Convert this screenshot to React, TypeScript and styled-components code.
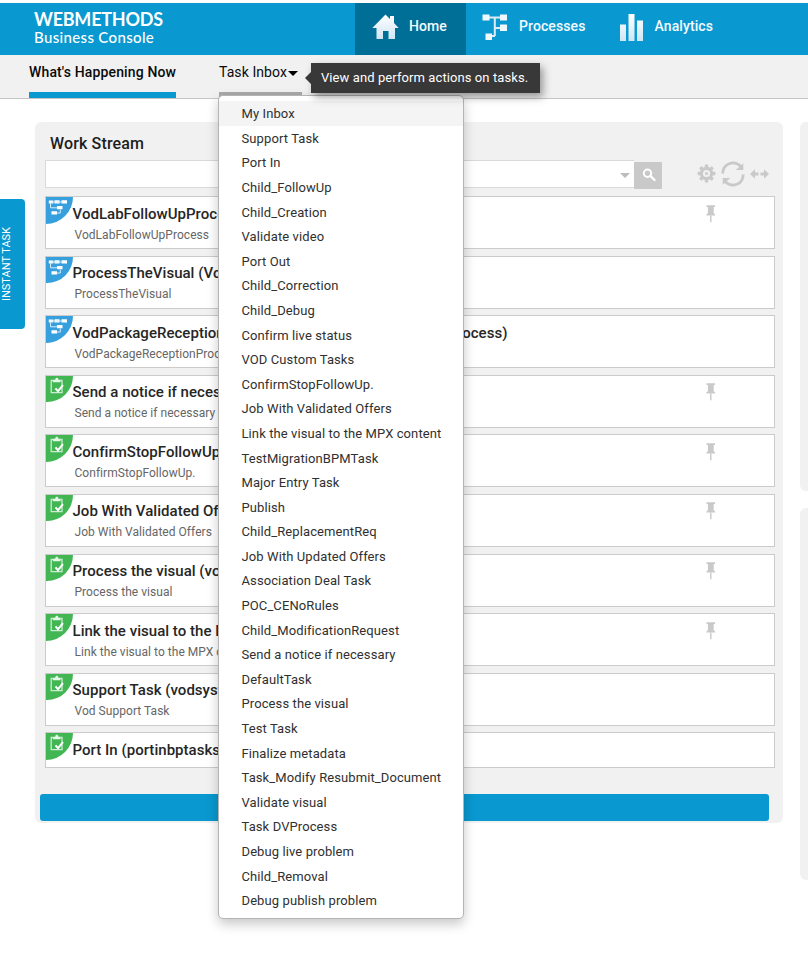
import React from 'react';
import styled, { createGlobalStyle } from 'styled-components';

const GlobalStyle = createGlobalStyle`
  * { box-sizing: border-box; }
  html, body { margin: 0; padding: 0; overflow: hidden; background: #fff; }
  body { font-family: Roboto, "Liberation Sans", sans-serif; color: #222; }
`;

const Page = styled.div`
  position: relative;
  width: 808px;
  height: 958px;
  overflow: hidden;
  background: #fff;
`;

const Header = styled.header`
  display: flex;
  height: 55px;
  border-top: 3px solid #c9cfd2;
  border-image: linear-gradient(#fff 55%, #bfc5c8 75%) 3;
  background: #0998cf;
`;

const Brand = styled.div`
  width: 355px;
  padding: 6px 0 0 34px;
  color: #fff;
  font-family: Lato, sans-serif;
`;

const BrandName = styled.div`
  font-size: 18px;
  line-height: 20px;
  font-weight: 700;
  letter-spacing: -0.25px;
`;

const BrandProduct = styled.div`
  margin-top: -1px;
  font-size: 15px;
  line-height: 18px;
  font-weight: 500;
  letter-spacing: 0.34px;
`;

const NavItem = styled.a<{ $active?: boolean; $width: number; $gap: number; $inset: number }>`
  display: flex;
  align-items: center;
  width: ${p => p.$width}px;
  height: 52px;
  padding: 0 0 4px ${p => p.$inset}px;
  gap: ${p => p.$gap}px;
  background: ${p => (p.$active ? '#006f98' : 'transparent')};
  color: #f4fbff;
  font-size: 14px;
  font-weight: 500;
  letter-spacing: 0.1px;
`;

const NavLabel = styled.span`
  padding-bottom: 1.5px;
`;

const SubNav = styled.nav`
  display: flex;
  height: 44px;
  padding-left: 29px;
  gap: 43px;
  background: #f1f1f1;
  border-bottom: 1px solid #c6c6c6;
`;

const Tab = styled.div<{ $active?: boolean }>`
  position: relative;
  display: flex;
  align-items: flex-start;
  width: ${p => (p.$active ? 147 : 83)}px;
  height: 43px;
  padding-top: 8px;
  border-bottom: 6px solid ${p => (p.$active ? '#0998cf' : '#a9a9a9')};
  color: #0a0a0a;
  font-size: 14px;
  line-height: 18px;
  font-weight: ${p => (p.$active ? 500 : 400)};
  letter-spacing: ${p => (p.$active ? 0.14 : 0.08)}px;
  white-space: nowrap;
`;

const Caret = styled.span<{ $muted?: boolean }>`
  flex: none;
  width: 0;
  height: 0;
  margin: ${p => (p.$muted ? '2px 4px 0 0' : '8px 0 0 1px')};
  border: ${p => (p.$muted ? 5.5 : 5)}px solid transparent;
  border-top-color: ${p => (p.$muted ? '#bcbcbc' : '#000')};
  border-bottom: 0;
`;

const Tooltip = styled.div`
  position: absolute;
  z-index: 4;
  left: 92px;
  top: 8px;
  width: 229px;
  height: 30px;
  padding-left: 10px;
  background: #383838;
  color: #fff;
  font-size: 13px;
  font-weight: 400;
  line-height: 30px;
  letter-spacing: 0.09px;
  box-shadow: 3px 4px 8px rgba(0, 0, 0, 0.38);

  &::before {
    content: '';
    position: absolute;
    left: -6px;
    top: 9px;
    border: 6px solid transparent;
    border-left: 0;
    border-right-color: #383838;
  }
`;

const Menu = styled.ul`
  position: absolute;
  z-index: 3;
  left: -1px;
  top: 40px;
  width: 246px;
  height: 824px;
  margin: 0;
  padding: 5px 0;
  list-style: none;
  background: #fff;
  border: 1px solid #b4b4b4;
  border-radius: 5px;
  box-shadow: 0 5px 12px rgba(0, 0, 0, 0.22);
`;

const MenuItem = styled.li<{ $hover?: boolean }>`
  height: 24.6px;
  padding: 1.2px 0 0 22.5px;
  background: ${p => (p.$hover ? '#f4f4f4' : 'transparent')};
  color: #303030;
  font-size: 13px;
  line-height: 24.6px;
  letter-spacing: 0.1px;
`;

const InstantTask = styled.button`
  position: absolute;
  left: 0;
  top: 199px;
  display: flex;
  align-items: center;
  justify-content: center;
  width: 25px;
  height: 130px;
  padding: 0 12px 0 0;
  border: 0;
  border-radius: 0 4px 4px 0;
  background: #0998cf;
  color: #fff;
  font: 400 11px Roboto, sans-serif;
`;

const Vertical = styled.span`
  writing-mode: vertical-rl;
  transform: rotate(180deg);
  white-space: nowrap;
`;

const Content = styled.main`
  display: flex;
  align-items: flex-start;
  gap: 17px;
  padding: 23px 0 0 35px;
`;

const Panel = styled.section`
  flex: none;
  width: 748px;
  height: 701px;
  padding: 12px 8px 0 10px;
  border-radius: 6px;
  background: #f1f1f1;
`;

const PanelTitle = styled.h2`
  margin: 0 0 7px 5px;
  color: #1d1d1d;
  font-size: 16px;
  line-height: 19px;
  font-weight: 500;
  letter-spacing: 0.14px;
`;

const Toolbar = styled.div`
  display: flex;
  align-items: flex-start;
  height: 36px;
`;

const SearchField = styled.div`
  display: flex;
  align-items: center;
  justify-content: flex-end;
  width: 589px;
  height: 28px;
  border: 1px solid #d9d9d9;
  border-right: 0;
  background: #fff;
`;

const SearchButton = styled.button`
  display: grid;
  place-items: center;
  width: 28px;
  height: 27px;
  margin-top: 2px;
  padding: 0 0 2px 1px;
  border: 0;
  border-radius: 1px;
  background: #c9c9c9;
`;

const Tools = styled.div`
  display: flex;
  align-items: center;
  gap: 5px;
  height: 27px;
  margin-left: 35px;
`;

const Stream = styled.div`
  display: flex;
  flex-direction: column;
  gap: 6.6px;
  width: 730px;
`;

const Card = styled.article<{ $short?: boolean }>`
  display: flex;
  height: ${p => (p.$short ? 36 : 53)}px;
  border: 1px solid #cbcbcb;
  background: #fff;
`;

const Badge = styled.div<{ $kind: Kind }>`
  flex: none;
  width: 26.5px;
  height: 26.5px;
  border-radius: 0 0 27px 0;
  background: ${p => (p.$kind === 'process' ? '#36a0de' : '#43b654')};
`;

const CardText = styled.div`
  width: 620px;
  padding-top: 7.5px;
  white-space: nowrap;
`;

const CardTitle = styled.div`
  color: #262626;
  font-size: 15px;
  line-height: 18px;
  font-weight: 500;
  letter-spacing: 0.03px;
`;

const CardSubtitle = styled.div`
  margin: 4px 0 0 2px;
  color: #666;
  font-size: 12px;
  line-height: 16px;
  letter-spacing: 0.04px;
`;

const PinSlot = styled.div`
  padding: 7.5px 0 0 13px;
`;

const MoreButton = styled.button`
  display: block;
  width: 729px;
  height: 27px;
  margin: 26px 0 0 -5px;
  border: 0;
  border-radius: 3px;
  background: #0998cf;
`;

const SideColumn = styled.aside`
  display: flex;
  flex-direction: column;
  gap: 17px;
`;

const SidePanel = styled.section<{ $height: number }>`
  width: 300px;
  height: ${p => p.$height}px;
  border-radius: 6px;
  background: #f1f1f1;
`;

const Icon = styled.svg`
  display: block;
  flex: none;
`;

type Kind = 'process' | 'task';

const IconFill = () => (
  <defs>
    <linearGradient id="iconFill" x1="0" y1="0" x2="0" y2="1">
      <stop offset="0" stopColor="#ffffff" />
      <stop offset="1" stopColor="#cfe6f3" />
    </linearGradient>
  </defs>
);

const HomeIcon = () => (
  <Icon width="27" height="26" viewBox="0 0 27 26">
    <IconFill />
    <path fill="url(#iconFill)" d="M13.5 0.5 18 5V2h4v7l4.7 4.9H23V25h-6.5v-8h-5.5v8H4.500V13.900H0.300z" />
  </Icon>
);

const ProcessesIcon = () => (
  <Icon width="26" height="26" viewBox="0 0 26 26">
    <path d="M4 3.500h20M12.800 3.500v18.500M8 22h5M13 14h8" stroke="#dcedf7" strokeWidth="2" fill="none" />
    <path fill="#f1f8fc" d="M0.500 0.500h7v6h-7zM18 0.500h7v6h-7zM18 10.500h7v6.500h-7zM3.500 19.500h6.500V26h-6.500z" />
  </Icon>
);

const AnalyticsIcon = () => (
  <Icon width="24" height="27" viewBox="0 0 24 27">
    <path fill="url(#iconFill)" d="M0 10.500h6V27H0zM8.500 0h6v27h-6zM17 6.500h6V27h-6z" />
  </Icon>
);

const SearchIcon = () => (
  <Icon width="14" height="14" viewBox="0 0 14 14" fill="none" stroke="#fff">
    <circle cx="5.500" cy="5.200" r="3.700" strokeWidth="2" />
    <path d="m8.500 8 4 4" strokeWidth="2.400" strokeLinecap="round" />
  </Icon>
);

const GearIcon = () => (
  <Icon width="19" height="19" viewBox="-9.500 -9.500 19 19">
    <g fill="#c9c9c9">
      {[0, 45, 90, 135].map(a => (
        <rect key={a} x="-1.700" y="-8.900" width="3.400" height="17.800" rx="0.600" transform={`rotate(${a})`} />
      ))}
      <circle r="6.700" />
    </g>
    <circle r="3.600" fill="#f1f1f1" />
    <circle r="1.500" fill="#c9c9c9" />
  </Icon>
);

const RefreshIcon = () => (
  <Icon width="24" height="26" viewBox="0 0 24 26">
    <g fill="none" stroke="#c9c9c9" strokeWidth="2.800">
      <path d="M1.800 12.500C1.800 3 12.500-1.800 20 5.500" />
      <path d="M22.200 13.500C22.200 23 11.500 27.800 4 20.500" />
    </g>
    <path fill="#c9c9c9" d="M22.300 2.200V9h-7.600zM1.700 23.800V17h7.600z" />
  </Icon>
);

const ResizeIcon = () => (
  <Icon width="19" height="10" viewBox="0 0 19 10">
    <path fill="#c9c9c9" d="M0 5 5 0.300V3.500h3.500v3H5v3.200zM19 5l-5-4.700v3.200h-3.500v3H14v3.200z" />
  </Icon>
);

const PinIcon = () => (
  <Icon width="10" height="18" viewBox="0 0 10 18">
    <path fill="#c9c9c9" d="M0.500 0.300h8.500v1.700H7.700v6.300c1 .5 1.600 1.200 1.600 2.200H0.300c0-1 .6-1.700 1.600-2.200V2H0.500z" />
    <path fill="#c9c9c9" d="M4.100 10.500h1.400v6.800H4.100z" />
  </Icon>
);

const ProcessBadge = () => (
  <Icon width="27" height="27" viewBox="0 0 27 27">
    <path fill="#fff" d="M2.800 3.500h4.500v3H2.800zM8.500 3.200h5v3.300h-5zM15.500 3.200h5.500v3.300h-5.500zM11 9h5.500v3.300H11zM5.500 14.200H11v3.300H5.500z" />
    <path d="M5 5h12M4.500 6.500v4.300h7M14.300 12.500V16h-3.500" fill="none" stroke="#d5ebf9" strokeWidth="1" />
  </Icon>
);

const TaskBadge = () => (
  <Icon width="27" height="27" viewBox="0 0 27 27">
    <path d="M7 4.500H5.200v12.200h10.800V4.500h-1.600" fill="none" stroke="#c9ebcf" strokeWidth="1.300" />
    <path d="M7 3.800h2.200c.2-2.600 3-2.600 3.200 0h2.100v2.400H7z" fill="#e6f6e9" />
    <path d="m9.500 12.300 2.500 2.900 5-6" fill="none" stroke="#fff" strokeWidth="2" />
  </Icon>
);

const menuItems = [
  'My Inbox', 'Support Task', 'Port In', 'Child_FollowUp', 'Child_Creation', 'Validate video', 'Port Out',
  'Child_Correction', 'Child_Debug', 'Confirm live status', 'VOD Custom Tasks', 'ConfirmStopFollowUp.',
  'Job With Validated Offers', 'Link the visual to the MPX content', 'TestMigrationBPMTask', 'Major Entry Task',
  'Publish', 'Child_ReplacementReq', 'Job With Updated Offers', 'Association Deal Task', 'POC_CENoRules',
  'Child_ModificationRequest', 'Send a notice if necessary', 'DefaultTask', 'Process the visual', 'Test Task',
  'Finalize metadata', 'Task_Modify Resubmit_Document', 'Validate visual', 'Task DVProcess',
  'Debug live problem', 'Child_Removal', 'Debug publish problem',
];

interface StreamEntry {
  kind: Kind;
  title: string;
  subtitle?: string;
  pinned?: boolean;
}

const stream: StreamEntry[] = [
  { kind: 'process', title: 'VodLabFollowUpProcess', subtitle: 'VodLabFollowUpProcess', pinned: true },
  { kind: 'process', title: 'ProcessTheVisual (VodProcess)', subtitle: 'ProcessTheVisual' },
  { kind: 'process', title: 'VodPackageReception_Process (VodPackageReceptionProcess)', subtitle: 'VodPackageReceptionProcess' },
  { kind: 'task', title: 'Send a notice if necessary', subtitle: 'Send a notice if necessary', pinned: true },
  { kind: 'task', title: 'ConfirmStopFollowUp.', subtitle: 'ConfirmStopFollowUp.', pinned: true },
  { kind: 'task', title: 'Job With Validated Offers', subtitle: 'Job With Validated Offers', pinned: true },
  { kind: 'task', title: 'Process the visual (vodsystem)', subtitle: 'Process the visual', pinned: true },
  { kind: 'task', title: 'Link the visual to the MPX content', subtitle: 'Link the visual to the MPX content', pinned: true },
  { kind: 'task', title: 'Support Task (vodsystem)', subtitle: 'Vod Support Task' },
  { kind: 'task', title: 'Port In (portinbptasks)' },
];

const StreamCard = ({ kind, title, subtitle, pinned }: StreamEntry) => (
  <Card $short={!subtitle}>
    <Badge $kind={kind}>{kind === 'process' ? <ProcessBadge /> : <TaskBadge />}</Badge>
    <CardText>
      <CardTitle>{title}</CardTitle>
      {subtitle && <CardSubtitle>{subtitle}</CardSubtitle>}
    </CardText>
    {pinned && <PinSlot><PinIcon /></PinSlot>}
  </Card>
);

export default function App() {
  return (
    <Page>
      <GlobalStyle />
      <Header>
        <Brand>
          <BrandName>WEBMETHODS</BrandName>
          <BrandProduct>Business Console</BrandProduct>
        </Brand>
        <NavItem $active $width={111} $inset={17} $gap={10}><HomeIcon /><NavLabel>Home</NavLabel></NavItem>
        <NavItem $width={137} $inset={16} $gap={11}><ProcessesIcon /><NavLabel>Processes</NavLabel></NavItem>
        <NavItem $width={130} $inset={17} $gap={10.5}><AnalyticsIcon /><NavLabel>Analytics</NavLabel></NavItem>
      </Header>
      <SubNav>
        <Tab $active>What's Happening Now</Tab>
        <Tab>
          Task Inbox<Caret />
          <Tooltip>View and perform actions on tasks.</Tooltip>
          <Menu>
            {menuItems.map((label, i) => <MenuItem key={label} $hover={i === 0}>{label}</MenuItem>)}
          </Menu>
        </Tab>
      </SubNav>
      <Content>
        <Panel>
          <PanelTitle>Work Stream</PanelTitle>
          <Toolbar>
            <SearchField><Caret $muted /></SearchField>
            <SearchButton><SearchIcon /></SearchButton>
            <Tools><GearIcon /><RefreshIcon /><ResizeIcon /></Tools>
          </Toolbar>
          <Stream>
            {stream.map(entry => <StreamCard key={entry.title} {...entry} />)}
          </Stream>
          <MoreButton />
        </Panel>
        <SideColumn>
          <SidePanel $height={369} />
          <SidePanel $height={372} />
        </SideColumn>
      </Content>
      <InstantTask><Vertical>INSTANT TASK</Vertical></InstantTask>
    </Page>
  );
}
